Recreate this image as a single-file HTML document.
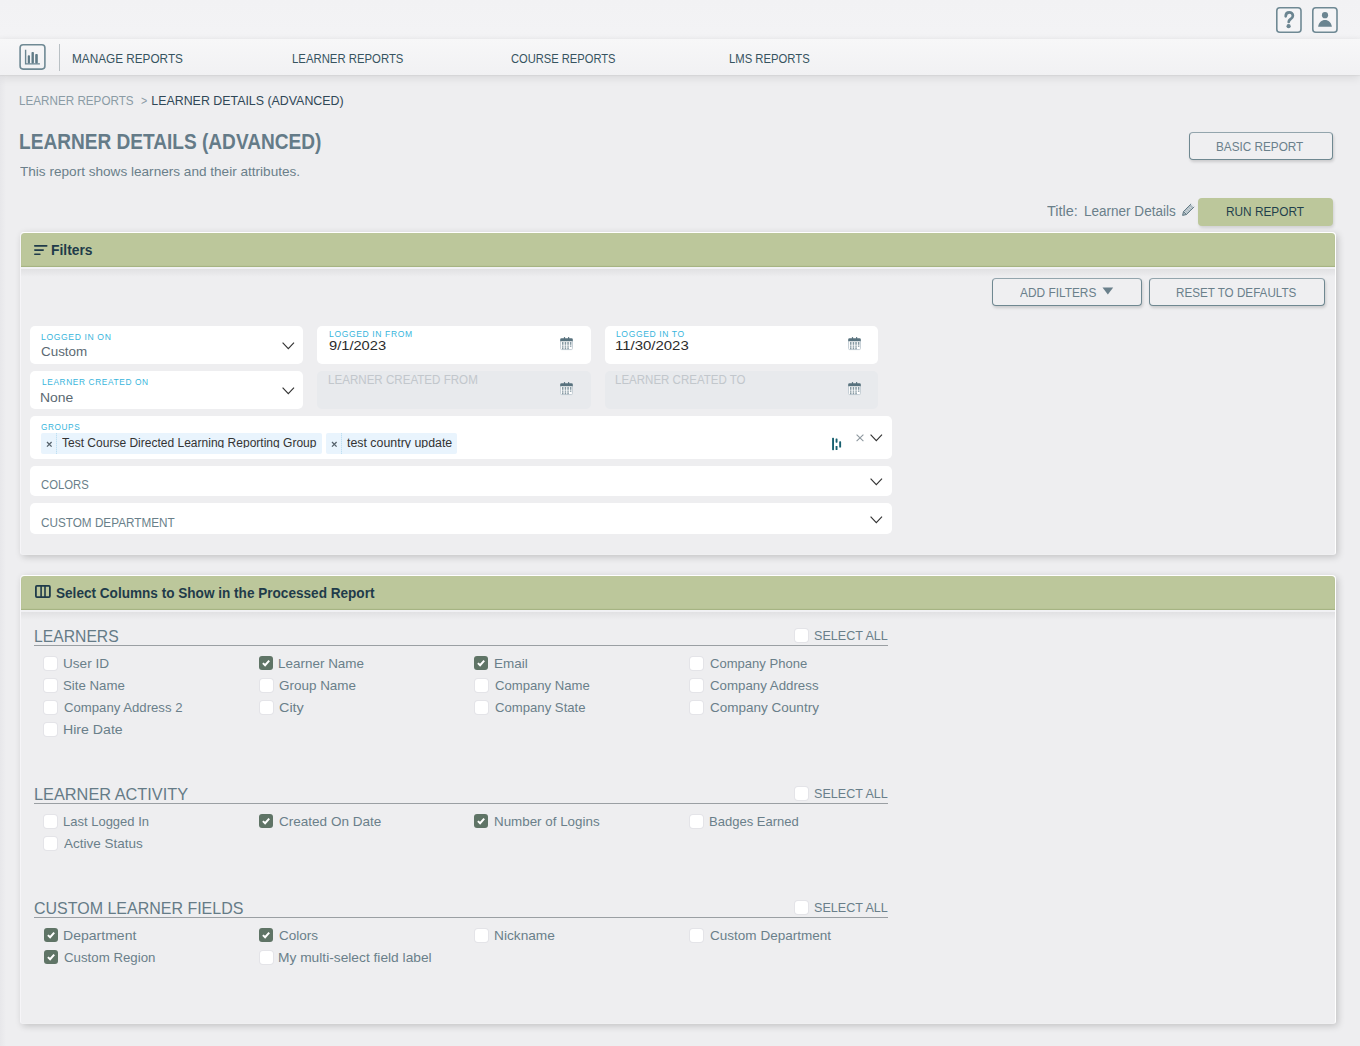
<!DOCTYPE html>
<html><head><meta charset="utf-8"><style>
*{box-sizing:border-box;margin:0;padding:0}
html,body{width:1360px;height:1046px;overflow:hidden}
body{font-family:"Liberation Sans",sans-serif;background:linear-gradient(to right,#e7e7ea 0,#eeeef0 6px);position:relative;color:#657b87}
.a{position:absolute;white-space:nowrap;line-height:1}
.t{position:absolute;white-space:nowrap;line-height:1;transform-origin:0 0}
svg{position:absolute;overflow:visible}
#top{left:0;top:0;width:1360px;height:39px;background:linear-gradient(#f2f2f4 0,#f3f3f5 90%,#efeff1 100%)}
.tbtn{position:absolute;top:7px;width:26px;height:26px;border:1.5px solid #6e8793;border-radius:4px;background:#f3f3f5}
#nav{left:0;top:39px;width:1360px;height:36px;background:linear-gradient(#f7f7f8,#f1f1f3);box-shadow:0 1px 1px rgba(0,0,0,.04),0 3px 9px rgba(0,0,0,.09)}
.btn{position:absolute;border:1.4px solid #6f8891;border-top-color:#93a5ad;border-radius:4px;box-shadow:1px 2px 3px rgba(0,0,0,.15);background:#efeff1}
.card{position:absolute;left:20px;width:1316px;border:1px solid #fff;border-left-color:#f6f5f8;border-bottom-color:#f0f0f2;border-radius:4px 4px 3px 3px;background:#eeeef0;box-shadow:2px 2px 7px rgba(0,0,0,.19)}
.cshade{position:absolute;left:0;right:0;height:8px;background:linear-gradient(#e1e1e3,#eeeef0)}
.chead{position:absolute;left:0;top:0;right:0;height:34px;background:#bcc79b;border-radius:4px 4px 0 0;box-shadow:inset 0 -1px 1px rgba(120,140,80,.35)}
.cline{position:absolute;left:0;right:0;top:34px;height:2px;background:#f1f1f4}
.fld{position:absolute;background:#fff;border-radius:5px}
.fld.dis{background:#e8eaed}
.cb{position:absolute;width:13px;height:13px;border-radius:3px;background:#fff;box-shadow:0 0 0 1px #e4e4e8}
.cb.on{width:14px;height:14px;background:#5f7466;box-shadow:none}
.line{position:absolute;left:34px;width:854px;height:1px;background:#9a9fa3}
.chip{position:absolute;top:433px;height:21px;background:#e9f4fd;border-radius:2px}
</style></head><body>
<div id="top" class="a"></div>
<svg style="left:1276px;top:7px" width="26" height="26" viewBox="0 0 26 26"><rect x=".8" y=".8" width="24.2" height="24.4" rx="3" fill="#f4f4f6" stroke="#6f8994" stroke-width="1.6"/><path d="M9.7 9.3C9.7 6.7 11.3 5.4 13.3 5.4 15.3 5.4 16.9 6.8 16.9 8.7 16.9 10.4 15.8 11.3 14.5 12.2 13.4 13 12.7 13.7 12.7 15" fill="none" stroke="#6b8591" stroke-width="2.7" stroke-linecap="round"/><circle cx="12.6" cy="19.2" r="2.1" fill="#6b8591"/></svg>
<svg style="left:1312px;top:7px" width="26" height="26" viewBox="0 0 26 26"><rect x=".8" y=".8" width="24.2" height="24.4" rx="3" fill="#f4f4f6" stroke="#6f8994" stroke-width="1.6"/><circle cx="13" cy="8.2" r="3.1" fill="#6b8591"/><path d="M6.1 19.7C6.8 15.6 9.6 13.1 13 13.1S19.2 15.6 19.9 19.7Z" fill="#6b8591"/></svg>
<div id="nav" class="a"></div>
<svg style="left:19px;top:44px" width="27" height="26" viewBox="0 0 27 26"><rect x="1.1" y=".8" width="24.8" height="24.3" rx="3" fill="none" stroke="#6f8994" stroke-width="1.6"/><path d="M6.6 5.7V19.9H20.9" fill="none" stroke="#6b8591" stroke-width="1.4"/><rect x="8.75" y="11.2" width="2.2" height="8.2" rx=".9" fill="#5f7a86"/><rect x="12.5" y="7.9" width="2.4" height="11.5" rx=".9" fill="#5f7a86"/><rect x="16.2" y="9.9" width="2.6" height="9.5" rx=".9" fill="#5f7a86"/></svg>
<div class="a" style="left:59px;top:44px;width:1px;height:27px;background:#b9c0c4"></div>
<div class="t" style="left:72.07px;top:53px;font-size:12.6px;color:#36535f;transform:scaleX(0.9342);">MANAGE REPORTS</div>
<div class="t" style="left:291.70px;top:53px;font-size:12.6px;color:#36535f;transform:scaleX(0.9008);">LEARNER REPORTS</div>
<div class="t" style="left:510.80px;top:53px;font-size:12.6px;color:#36535f;transform:scaleX(0.8856);">COURSE REPORTS</div>
<div class="t" style="left:728.90px;top:53px;font-size:12.6px;color:#36535f;transform:scaleX(0.8966);">LMS REPORTS</div>
<div class="t" style="left:19.06px;top:95px;font-size:12.4px;color:#8a9ba5;transform:scaleX(0.9421);">LEARNER REPORTS</div>
<div class="t" style="left:141.00px;top:95px;font-size:12.4px;color:#8a9ba5;transform:scaleX(0.8571);">&gt;</div>
<div class="t" style="left:151.30px;top:95px;font-size:12.4px;color:#2f4757;">LEARNER DETAILS (ADVANCED)</div>
<div class="t" style="left:19.16px;top:130px;font-size:22.7px;font-weight:700;color:#647b88;transform:scaleX(0.8408);">LEARNER DETAILS (ADVANCED)</div>
<div class="t" style="left:20.00px;top:165px;font-size:13.4px;color:#6a7f8a;transform:scaleX(1.0145);">This report shows learners and their attributes.</div>
<div class="btn" style="left:1189px;top:132px;width:144px;height:28px"></div>
<div class="t" style="left:1216.07px;top:141px;font-size:12.6px;color:#6a808b;transform:scaleX(0.9333);">BASIC REPORT</div>
<div class="t" style="left:1046.50px;top:204px;font-size:14px;color:#6a7f8a;transform:scaleX(1.0345);">Title:</div>
<div class="t" style="left:1083.53px;top:204px;font-size:14px;color:#6a7f8a;transform:scaleX(0.9660);">Learner Details</div>
<svg style="left:1181px;top:202px" width="15" height="15" viewBox="0 0 15 15"><path d="M1.6 13.4l.9-3.9 7.6-7.6 3 3-7.6 7.6z" fill="#aebbc3" stroke="#5f7782" stroke-width="1" stroke-linejoin="round"/><path d="M3.6 9.4l2 2M5.2 7.8l2 2M6.8 6.2l2 2M8.4 4.6l2 2" stroke="#e8edf0" stroke-width=".8"/><path d="M10.1 1.9l3 3" stroke="#f4f6f8" stroke-width="1.2"/><path d="M2.5 9.5l3 3" stroke="#5f7782" stroke-width=".9"/></svg>
<div class="a" style="left:1198px;top:198px;width:135px;height:28px;background:#bcc79b;border-radius:4px;box-shadow:1px 2px 3px rgba(0,0,0,.12)"></div>
<div class="t" style="left:1226.06px;top:206px;font-size:12.6px;color:#1f3f4c;transform:scaleX(0.9390);">RUN REPORT</div>
<div class="card" style="top:232px;height:323px"><div class="cshade" style="top:36px"></div><div class="chead"></div><div class="cline"></div></div>
<svg style="left:34px;top:245px" width="14" height="11" viewBox="0 0 14 11"><rect x="0" y="0" width="13.5" height="1.7" rx=".8" fill="#1f3b4a"/><rect x="0" y="4.2" width="10" height="1.7" rx=".8" fill="#1f3b4a"/><rect x="0" y="8.4" width="6.7" height="1.7" rx=".8" fill="#1f3b4a"/></svg>
<div class="t" style="left:50.95px;top:243px;font-size:14.5px;font-weight:700;color:#1f3b4a;transform:scaleX(0.9548);">Filters</div>
<div class="btn" style="left:992px;top:278px;width:150px;height:28px"></div>
<div class="t" style="left:1020.20px;top:286px;font-size:13.2px;color:#6a808b;transform:scaleX(0.9012);">ADD FILTERS</div>
<svg style="left:1102px;top:287px" width="12" height="8" viewBox="0 0 12 8"><path d="M0.5 0.5H11.2L5.85 7.5z" fill="#6a808b"/></svg>
<div class="btn" style="left:1149px;top:278px;width:176px;height:28px"></div>
<div class="t" style="left:1176.12px;top:286px;font-size:13.2px;color:#6a808b;transform:scaleX(0.8844);">RESET TO DEFAULTS</div>
<div class="fld" style="left:30px;top:326px;width:273px;height:38px"></div>
<div class="t" style="left:41.40px;top:333px;font-size:8.3px;letter-spacing:.6px;color:#38b5dc;transform:scaleX(1.0358);">LOGGED IN ON</div>
<div class="t" style="left:41.40px;top:346px;font-size:12.8px;color:#5b6972;transform:scaleX(1.0477);">Custom</div>
<svg style="left:282px;top:341.5px" width="13" height="8" viewBox="0 0 13 8"><path d="M.6 .6L6.3 6.6 12 .6" fill="none" stroke="#333" stroke-width="1.15"/></svg>
<div class="fld" style="left:317px;top:326px;width:274px;height:38px"></div>
<div class="t" style="left:328.80px;top:331px;font-size:8.2px;letter-spacing:.6px;color:#38b5dc;transform:scaleX(1.0430);">LOGGED IN FROM</div>
<div class="t" style="left:328.50px;top:339px;font-size:13.5px;color:#2b2b2b;transform:scaleX(1.0865);">9/1/2023</div>
<svg style="left:560px;top:337px" width="13" height="14" viewBox="0 0 13 14"><rect x=".6" y="3.2" width="11.8" height="9.4" rx="1" fill="#fff" stroke="#c3cdd4" stroke-width="1"/><path d="M.2 4.2V2.6Q.2 1.3 1.5 1.3H11.5Q12.8 1.3 12.8 2.6V4.2Z" fill="#58727e"/><rect x="3.9" y=".1" width="1.2" height="2.2" fill="#58727e"/><rect x="8" y=".1" width="1.2" height="2.2" fill="#58727e"/><rect x="2.0" y="5.0" width="1.5" height="2.8" fill="#58727e" fill-opacity=".72"/><rect x="4.7" y="5.0" width="1.5" height="2.8" fill="#58727e" fill-opacity=".72"/><rect x="7.3" y="5.0" width="1.5" height="2.8" fill="#58727e" fill-opacity=".72"/><rect x="9.9" y="5.0" width="1.5" height="2.8" fill="#58727e" fill-opacity=".72"/><rect x="2.0" y="8.5" width="1.5" height="1.3" fill="#58727e" fill-opacity=".72"/><rect x="4.7" y="8.5" width="1.5" height="1.3" fill="#58727e" fill-opacity=".72"/><rect x="7.3" y="8.5" width="1.5" height="1.3" fill="#58727e" fill-opacity=".72"/><rect x="9.9" y="8.5" width="1.5" height="1.3" fill="#58727e" fill-opacity=".72"/><rect x="2.0" y="10.3" width="1.5" height="1.9" fill="#58727e" fill-opacity=".72"/><rect x="4.7" y="10.3" width="1.5" height="1.9" fill="#58727e" fill-opacity=".72"/><rect x="7.3" y="10.3" width="1.5" height="1.9" fill="#58727e" fill-opacity=".72"/></svg>
<div class="fld" style="left:605px;top:326px;width:273px;height:38px"></div>
<div class="t" style="left:616.20px;top:331px;font-size:8.2px;letter-spacing:.6px;color:#38b5dc;transform:scaleX(1.0415);">LOGGED IN TO</div>
<div class="t" style="left:615.09px;top:339px;font-size:13.5px;color:#2b2b2b;transform:scaleX(1.1077);">11/30/2023</div>
<svg style="left:848px;top:337px" width="13" height="14" viewBox="0 0 13 14"><rect x=".6" y="3.2" width="11.8" height="9.4" rx="1" fill="#fff" stroke="#c3cdd4" stroke-width="1"/><path d="M.2 4.2V2.6Q.2 1.3 1.5 1.3H11.5Q12.8 1.3 12.8 2.6V4.2Z" fill="#58727e"/><rect x="3.9" y=".1" width="1.2" height="2.2" fill="#58727e"/><rect x="8" y=".1" width="1.2" height="2.2" fill="#58727e"/><rect x="2.0" y="5.0" width="1.5" height="2.8" fill="#58727e" fill-opacity=".72"/><rect x="4.7" y="5.0" width="1.5" height="2.8" fill="#58727e" fill-opacity=".72"/><rect x="7.3" y="5.0" width="1.5" height="2.8" fill="#58727e" fill-opacity=".72"/><rect x="9.9" y="5.0" width="1.5" height="2.8" fill="#58727e" fill-opacity=".72"/><rect x="2.0" y="8.5" width="1.5" height="1.3" fill="#58727e" fill-opacity=".72"/><rect x="4.7" y="8.5" width="1.5" height="1.3" fill="#58727e" fill-opacity=".72"/><rect x="7.3" y="8.5" width="1.5" height="1.3" fill="#58727e" fill-opacity=".72"/><rect x="9.9" y="8.5" width="1.5" height="1.3" fill="#58727e" fill-opacity=".72"/><rect x="2.0" y="10.3" width="1.5" height="1.9" fill="#58727e" fill-opacity=".72"/><rect x="4.7" y="10.3" width="1.5" height="1.9" fill="#58727e" fill-opacity=".72"/><rect x="7.3" y="10.3" width="1.5" height="1.9" fill="#58727e" fill-opacity=".72"/></svg>
<div class="fld" style="left:30px;top:371px;width:273px;height:38px"></div>
<div class="t" style="left:41.50px;top:379px;font-size:8.2px;letter-spacing:.6px;color:#38b5dc;transform:scaleX(1.0183);">LEARNER CREATED ON</div>
<div class="t" style="left:40.44px;top:391px;font-size:13.2px;color:#5b6972;transform:scaleX(1.0567);">None</div>
<svg style="left:282px;top:387px" width="13" height="8" viewBox="0 0 13 8"><path d="M.6 .6L6.3 6.6 12 .6" fill="none" stroke="#333" stroke-width="1.15"/></svg>
<div class="fld dis" style="left:317px;top:371px;width:274px;height:38px"></div>
<div class="t" style="left:327.54px;top:374px;font-size:12.1px;color:#c2c7cc;transform:scaleX(0.9581);">LEARNER CREATED FROM</div>
<svg style="left:560px;top:382px" width="13" height="14" viewBox="0 0 13 14"><rect x=".6" y="3.2" width="11.8" height="9.4" rx="1" fill="#fff" stroke="#c3cdd4" stroke-width="1"/><path d="M.2 4.2V2.6Q.2 1.3 1.5 1.3H11.5Q12.8 1.3 12.8 2.6V4.2Z" fill="#58727e"/><rect x="3.9" y=".1" width="1.2" height="2.2" fill="#58727e"/><rect x="8" y=".1" width="1.2" height="2.2" fill="#58727e"/><rect x="2.0" y="5.0" width="1.5" height="2.8" fill="#58727e" fill-opacity=".72"/><rect x="4.7" y="5.0" width="1.5" height="2.8" fill="#58727e" fill-opacity=".72"/><rect x="7.3" y="5.0" width="1.5" height="2.8" fill="#58727e" fill-opacity=".72"/><rect x="9.9" y="5.0" width="1.5" height="2.8" fill="#58727e" fill-opacity=".72"/><rect x="2.0" y="8.5" width="1.5" height="1.3" fill="#58727e" fill-opacity=".72"/><rect x="4.7" y="8.5" width="1.5" height="1.3" fill="#58727e" fill-opacity=".72"/><rect x="7.3" y="8.5" width="1.5" height="1.3" fill="#58727e" fill-opacity=".72"/><rect x="9.9" y="8.5" width="1.5" height="1.3" fill="#58727e" fill-opacity=".72"/><rect x="2.0" y="10.3" width="1.5" height="1.9" fill="#58727e" fill-opacity=".72"/><rect x="4.7" y="10.3" width="1.5" height="1.9" fill="#58727e" fill-opacity=".72"/><rect x="7.3" y="10.3" width="1.5" height="1.9" fill="#58727e" fill-opacity=".72"/></svg>
<div class="fld dis" style="left:605px;top:371px;width:273px;height:38px"></div>
<div class="t" style="left:615.45px;top:374px;font-size:12.1px;color:#c2c7cc;transform:scaleX(0.9522);">LEARNER CREATED TO</div>
<svg style="left:848px;top:382px" width="13" height="14" viewBox="0 0 13 14"><rect x=".6" y="3.2" width="11.8" height="9.4" rx="1" fill="#fff" stroke="#c3cdd4" stroke-width="1"/><path d="M.2 4.2V2.6Q.2 1.3 1.5 1.3H11.5Q12.8 1.3 12.8 2.6V4.2Z" fill="#58727e"/><rect x="3.9" y=".1" width="1.2" height="2.2" fill="#58727e"/><rect x="8" y=".1" width="1.2" height="2.2" fill="#58727e"/><rect x="2.0" y="5.0" width="1.5" height="2.8" fill="#58727e" fill-opacity=".72"/><rect x="4.7" y="5.0" width="1.5" height="2.8" fill="#58727e" fill-opacity=".72"/><rect x="7.3" y="5.0" width="1.5" height="2.8" fill="#58727e" fill-opacity=".72"/><rect x="9.9" y="5.0" width="1.5" height="2.8" fill="#58727e" fill-opacity=".72"/><rect x="2.0" y="8.5" width="1.5" height="1.3" fill="#58727e" fill-opacity=".72"/><rect x="4.7" y="8.5" width="1.5" height="1.3" fill="#58727e" fill-opacity=".72"/><rect x="7.3" y="8.5" width="1.5" height="1.3" fill="#58727e" fill-opacity=".72"/><rect x="9.9" y="8.5" width="1.5" height="1.3" fill="#58727e" fill-opacity=".72"/><rect x="2.0" y="10.3" width="1.5" height="1.9" fill="#58727e" fill-opacity=".72"/><rect x="4.7" y="10.3" width="1.5" height="1.9" fill="#58727e" fill-opacity=".72"/><rect x="7.3" y="10.3" width="1.5" height="1.9" fill="#58727e" fill-opacity=".72"/></svg>
<div class="fld" style="left:30px;top:416px;width:862px;height:43px"></div>
<div class="t" style="left:41.20px;top:423px;font-size:8.3px;letter-spacing:.6px;color:#38b5dc;transform:scaleX(0.9923);">GROUPS</div>
<div class="chip" style="left:41px;width:281px"></div>
<div class="a" style="left:56px;top:433px;width:1px;height:21px;background:repeating-linear-gradient(#bfe0f3 0 1px,#d9ecf8 1px 2px)"></div>
<svg style="left:45.5px;top:440.8px" width="7" height="7" viewBox="0 0 7 7"><path d="M1 1L5.6 5.6M5.6 1L1 5.6" stroke="#56626b" stroke-width="1.3"/></svg>
<div class="t" style="left:62.30px;top:437px;font-size:12.5px;color:#333;clip-path:inset(-4px -4px 1.5px -4px);transform:scaleX(0.9611);">Test Course Directed Learning Reporting Group</div>
<div class="chip" style="left:326px;width:131px"></div>
<div class="a" style="left:341px;top:433px;width:1px;height:21px;background:repeating-linear-gradient(#bfe0f3 0 1px,#d9ecf8 1px 2px)"></div>
<svg style="left:330.5px;top:440.8px" width="7" height="7" viewBox="0 0 7 7"><path d="M1 1L5.6 5.6M5.6 1L1 5.6" stroke="#56626b" stroke-width="1.3"/></svg>
<div class="t" style="left:347.00px;top:437px;font-size:12.5px;color:#333;clip-path:inset(-4px -4px 1.5px -4px);transform:scaleX(0.9896);">test country update</div>
<svg style="left:832px;top:437px" width="10" height="14" viewBox="0 0 10 14"><rect x=".1" y=".8" width="1.9" height="12.4" rx=".6" fill="#17606f"/><rect x="3.6" y="1.5" width="1.9" height="4.2" rx=".6" fill="#17606f"/><rect x="3.6" y="9" width="1.9" height="4" rx=".6" fill="#17606f"/><rect x="7.2" y="4.3" width="1.9" height="6.3" rx=".6" fill="#17606f"/></svg>
<svg style="left:856px;top:434px" width="8" height="8" viewBox="0 0 8 8"><path d="M.6 .6L7.4 7.2M7.4 .6L.6 7.2" stroke="#8d979e" stroke-width="1.1"/></svg>
<svg style="left:870px;top:434px" width="13" height="8" viewBox="0 0 13 8"><path d="M.6 .6L6.3 6.6 12 .6" fill="none" stroke="#333" stroke-width="1.15"/></svg>
<div class="fld" style="left:30px;top:466px;width:862px;height:30px"></div>
<div class="t" style="left:41.10px;top:479px;font-size:12.4px;color:#6a7f8a;transform:scaleX(0.9115);">COLORS</div>
<svg style="left:870px;top:478px" width="13" height="8" viewBox="0 0 13 8"><path d="M.6 .6L6.3 6.6 12 .6" fill="none" stroke="#333" stroke-width="1.15"/></svg>
<div class="fld" style="left:30px;top:503px;width:862px;height:31px"></div>
<div class="t" style="left:41.10px;top:517px;font-size:12.1px;color:#6a7f8a;transform:scaleX(0.9703);">CUSTOM DEPARTMENT</div>
<svg style="left:870px;top:515.5px" width="13" height="8" viewBox="0 0 13 8"><path d="M.6 .6L6.3 6.6 12 .6" fill="none" stroke="#333" stroke-width="1.15"/></svg>
<div class="card" style="top:575px;height:449px"><div class="cshade" style="top:36px"></div><div class="chead"></div><div class="cline"></div></div>
<svg style="left:35px;top:585px" width="16" height="13" viewBox="0 0 16 13"><rect x=".9" y=".9" width="14" height="11.2" rx="1" fill="none" stroke="#1f3b4a" stroke-width="1.8"/><rect x="5.3" y="1" width="1.6" height="11" fill="#1f3b4a"/><rect x="9.2" y="1" width="1.6" height="11" fill="#1f3b4a"/></svg>
<div class="t" style="left:55.90px;top:586px;font-size:14px;font-weight:700;color:#1f3b4a;transform:scaleX(0.9701);">Select Columns to Show in the Processed Report</div>
<div class="t" style="left:33.75px;top:629px;font-size:16.6px;color:#657b87;transform:scaleX(0.9466);">LEARNERS</div>
<div class="line" style="top:644.9px"></div>
<div class="cb" style="left:794.5px;top:629.0px"></div>
<div class="t" style="left:813.95px;top:629px;font-size:13.3px;color:#6a7f8a;transform:scaleX(0.9455);">SELECT ALL</div>
<div class="cb" style="left:44.0px;top:656.6px"></div>
<div class="t" style="left:63.35px;top:658px;font-size:12.9px;color:#6a7f8a;transform:scaleX(1.0535);">User ID</div>
<div class="cb on" style="left:259px;top:655.9px"><svg style="left:3px;top:3px" width="8" height="8" viewBox="0 0 8 8"><path d="M.9 4.1L3.1 6.2 7.2 1.6" fill="none" stroke="#fff" stroke-width="2"/></svg></div>
<div class="t" style="left:278.36px;top:658px;font-size:12.9px;color:#6a7f8a;transform:scaleX(1.0444);">Learner Name</div>
<div class="cb on" style="left:474px;top:655.9px"><svg style="left:3px;top:3px" width="8" height="8" viewBox="0 0 8 8"><path d="M.9 4.1L3.1 6.2 7.2 1.6" fill="none" stroke="#fff" stroke-width="2"/></svg></div>
<div class="t" style="left:493.55px;top:658px;font-size:12.9px;color:#6a7f8a;transform:scaleX(1.0452);">Email</div>
<div class="cb" style="left:690.0px;top:656.6px"></div>
<div class="t" style="left:710.00px;top:658px;font-size:12.9px;color:#6a7f8a;transform:scaleX(1.0125);">Company Phone</div>
<div class="cb" style="left:44.0px;top:678.6px"></div>
<div class="t" style="left:63.37px;top:680px;font-size:12.9px;color:#6a7f8a;transform:scaleX(1.0271);">Site Name</div>
<div class="cb" style="left:259.5px;top:678.6px"></div>
<div class="t" style="left:279.40px;top:680px;font-size:12.9px;color:#6a7f8a;transform:scaleX(1.0438);">Group Name</div>
<div class="cb" style="left:474.5px;top:678.6px"></div>
<div class="t" style="left:494.60px;top:680px;font-size:12.9px;color:#6a7f8a;transform:scaleX(1.0183);">Company Name</div>
<div class="cb" style="left:690.0px;top:678.6px"></div>
<div class="t" style="left:710.00px;top:680px;font-size:12.9px;color:#6a7f8a;transform:scaleX(1.0305);">Company Address</div>
<div class="cb" style="left:44.0px;top:700.6px"></div>
<div class="t" style="left:64.40px;top:702px;font-size:12.9px;color:#6a7f8a;transform:scaleX(1.0207);">Company Address 2</div>
<div class="cb" style="left:259.5px;top:700.6px"></div>
<div class="t" style="left:279.40px;top:702px;font-size:12.9px;color:#6a7f8a;transform:scaleX(1.1182);">City</div>
<div class="cb" style="left:474.5px;top:700.6px"></div>
<div class="t" style="left:494.60px;top:702px;font-size:12.9px;color:#6a7f8a;transform:scaleX(1.0191);">Company State</div>
<div class="cb" style="left:690.0px;top:700.6px"></div>
<div class="t" style="left:710.00px;top:702px;font-size:12.9px;color:#6a7f8a;transform:scaleX(1.0481);">Company Country</div>
<div class="cb" style="left:44.0px;top:722.6px"></div>
<div class="t" style="left:63.30px;top:724px;font-size:12.9px;color:#6a7f8a;transform:scaleX(1.0962);">Hire Date</div>
<div class="t" style="left:33.72px;top:787px;font-size:16.6px;color:#657b87;transform:scaleX(0.9833);">LEARNER ACTIVITY</div>
<div class="line" style="top:803.2px"></div>
<div class="cb" style="left:794.5px;top:787.3px"></div>
<div class="t" style="left:813.95px;top:787px;font-size:13.3px;color:#6a7f8a;transform:scaleX(0.9455);">SELECT ALL</div>
<div class="cb" style="left:44.0px;top:814.9px"></div>
<div class="t" style="left:63.39px;top:816px;font-size:12.9px;color:#6a7f8a;transform:scaleX(1.0083);">Last Logged In</div>
<div class="cb on" style="left:259px;top:814.2px"><svg style="left:3px;top:3px" width="8" height="8" viewBox="0 0 8 8"><path d="M.9 4.1L3.1 6.2 7.2 1.6" fill="none" stroke="#fff" stroke-width="2"/></svg></div>
<div class="t" style="left:279.40px;top:816px;font-size:12.9px;color:#6a7f8a;transform:scaleX(1.0495);">Created On Date</div>
<div class="cb on" style="left:474px;top:814.2px"><svg style="left:3px;top:3px" width="8" height="8" viewBox="0 0 8 8"><path d="M.9 4.1L3.1 6.2 7.2 1.6" fill="none" stroke="#fff" stroke-width="2"/></svg></div>
<div class="t" style="left:493.56px;top:816px;font-size:12.9px;color:#6a7f8a;transform:scaleX(1.0376);">Number of Logins</div>
<div class="cb" style="left:690.0px;top:814.9px"></div>
<div class="t" style="left:708.99px;top:816px;font-size:12.9px;color:#6a7f8a;transform:scaleX(1.0103);">Badges Earned</div>
<div class="cb" style="left:44.0px;top:836.9px"></div>
<div class="t" style="left:64.40px;top:838px;font-size:12.9px;color:#6a7f8a;transform:scaleX(1.0467);">Active Status</div>
<div class="t" style="left:33.74px;top:901px;font-size:16.6px;color:#657b87;transform:scaleX(0.9634);">CUSTOM LEARNER FIELDS</div>
<div class="line" style="top:916.8px"></div>
<div class="cb" style="left:794.5px;top:900.9px"></div>
<div class="t" style="left:813.95px;top:901px;font-size:13.3px;color:#6a7f8a;transform:scaleX(0.9455);">SELECT ALL</div>
<div class="cb on" style="left:43.5px;top:927.8px"><svg style="left:3px;top:3px" width="8" height="8" viewBox="0 0 8 8"><path d="M.9 4.1L3.1 6.2 7.2 1.6" fill="none" stroke="#fff" stroke-width="2"/></svg></div>
<div class="t" style="left:63.31px;top:930px;font-size:12.9px;color:#6a7f8a;transform:scaleX(1.0896);">Department</div>
<div class="cb on" style="left:259px;top:927.8px"><svg style="left:3px;top:3px" width="8" height="8" viewBox="0 0 8 8"><path d="M.9 4.1L3.1 6.2 7.2 1.6" fill="none" stroke="#fff" stroke-width="2"/></svg></div>
<div class="t" style="left:279.40px;top:930px;font-size:12.9px;color:#6a7f8a;transform:scaleX(1.0486);">Colors</div>
<div class="cb" style="left:474.5px;top:928.5px"></div>
<div class="t" style="left:493.54px;top:930px;font-size:12.9px;color:#6a7f8a;transform:scaleX(1.0625);">Nickname</div>
<div class="cb" style="left:690.0px;top:928.5px"></div>
<div class="t" style="left:710.00px;top:930px;font-size:12.9px;color:#6a7f8a;transform:scaleX(1.0500);">Custom Department</div>
<div class="cb on" style="left:43.5px;top:949.8px"><svg style="left:3px;top:3px" width="8" height="8" viewBox="0 0 8 8"><path d="M.9 4.1L3.1 6.2 7.2 1.6" fill="none" stroke="#fff" stroke-width="2"/></svg></div>
<div class="t" style="left:64.40px;top:952px;font-size:12.9px;color:#6a7f8a;transform:scaleX(1.0295);">Custom Region</div>
<div class="cb" style="left:259.5px;top:950.5px"></div>
<div class="t" style="left:278.33px;top:952px;font-size:12.9px;color:#6a7f8a;transform:scaleX(1.0671);">My multi-select field label</div>
</body></html>
